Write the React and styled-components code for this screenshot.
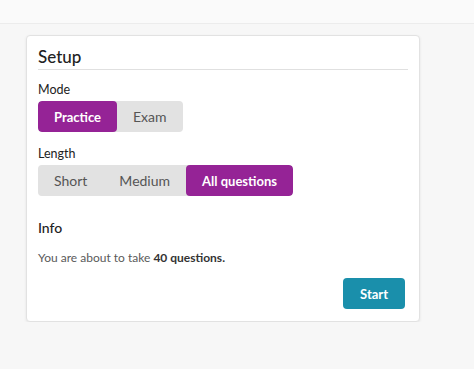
import React, { useState } from "react";
import styled, { createGlobalStyle } from "styled-components";

const GlobalStyle = createGlobalStyle`
  body {
    margin: 0;
    background: #f7f7f7;
    font-family: Lato, "Open Sans", sans-serif;
    color: #333;
  }
`;

const MODES = ["Practice", "Exam"];
const LENGTHS = ["Short", "Medium", "All questions"];

const App = () => {
  const [mode, setMode] = useState("Practice");
  const [length, setLength] = useState("All questions");

  return (
    <>
      <GlobalStyle />
      <TopBar />
      <Main>
        <Card>
          <Heading>Setup</Heading>

          <Label>Mode</Label>
          <Group>
            {MODES.map((m) => (
              <Choice key={m} active={m === mode} onClick={() => setMode(m)}>
                {m}
              </Choice>
            ))}
          </Group>

          <Label>Length</Label>
          <Group>
            {LENGTHS.map((l) => (
              <Choice key={l} active={l === length} onClick={() => setLength(l)}>
                {l}
              </Choice>
            ))}
          </Group>

          <SubHeading>Info</SubHeading>
          <InfoText>
            You are about to take <strong>40 questions.</strong>
          </InfoText>

          <Footer>
            <StartButton>Start</StartButton>
          </Footer>
        </Card>
      </Main>
    </>
  );
};

var TopBar = styled.div`
  height: 23px;
  background: #fafafa;
  border-bottom: 1px solid #ececec;
`;

var Main = styled.div`
  padding: 11px 0 0 26px;
  width: 394px;
`;

var Card = styled.div`
  background: #fff;
  border: 1px solid #e2e2e2;
  border-radius: 4px;
  box-shadow: 0 1px 3px rgba(0, 0, 0, 0.08);
  padding: 10px 11px 12px 11px;
`;

var Heading = styled.h2`
  margin: 0;
  font-size: 17px;
  font-weight: 500;
  line-height: 22px;
  padding-bottom: 1px;
  border-bottom: 1px solid #e0e0e0;
  color: #222;
`;

var Label = styled.div`
  margin-top: 12px;
  margin-bottom: 3px;
  font-size: 12.5px;
  line-height: 16px;
  color: #222;
`;

var Group = styled.div`
  display: inline-flex;
  border-radius: 4px;
  overflow: hidden;
  background: #e2e2e2;
  margin-bottom: 2px;
`;

var Choice = styled.button`
  border: none;
  height: 31px;
  padding: 0 16px;
  font-family: Lato, "Open Sans", sans-serif;
  font-size: ${(p) => (p.active ? "13px" : "14px")};
  font-weight: ${(p) => (p.active ? 700 : 400)};
  color: ${(p) => (p.active ? "#fff" : "#555")};
  background: ${(p) => (p.active ? "#952396" : "transparent")};
  border-radius: ${(p) => (p.active ? "4px" : "0")};
  cursor: pointer;
`;

var SubHeading = styled.h3`
  margin: 21px 0 0;
  font-size: 14px;
  font-weight: 500;
  line-height: 18px;
  color: #222;
`;

var InfoText = styled.p`
  margin: 13px 0 0;
  font-size: 12px;
  line-height: 16px;
  color: #5a5a5a;

  strong {
    color: #333;
    font-weight: 700;
  }
`;

var Footer = styled.div`
  display: flex;
  justify-content: flex-end;
  margin-top: 12px;
`;

var StartButton = styled.button`
  border: none;
  height: 31px;
  padding: 0 17px;
  border-radius: 4px;
  background: #1a8fab;
  color: #fff;
  font-family: Lato, "Open Sans", sans-serif;
  font-size: 13px;
  font-weight: 700;
  cursor: pointer;
  margin-right: 3px;
`;

export default App;
